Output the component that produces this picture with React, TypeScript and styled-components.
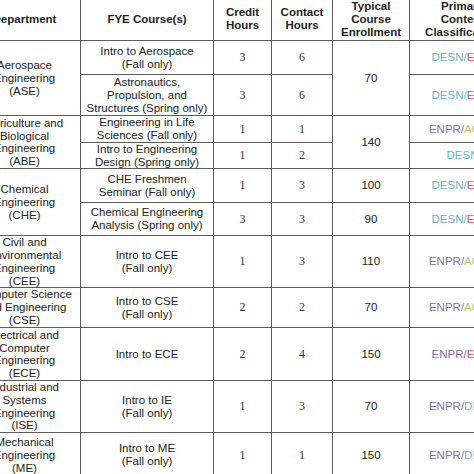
import React from 'react';
import styled, { createGlobalStyle } from 'styled-components';

const GlobalStyle = createGlobalStyle`
  html, body {
    margin: 0;
    padding: 0;
    background: #ffffff;
  }
`;

const Frame = styled.div`
  width: 474px;
  height: 474px;
  overflow: hidden;
  background: #ffffff;
`;

const Table = styled.table`
  border-collapse: collapse;
  table-layout: fixed;
  width: 547px;
  margin-left: -32px;
  margin-top: -3px;
  font-family: 'Liberation Sans', Arial, sans-serif;
  font-size: 11.5px;
  line-height: 13px;
  color: #222222;
  th,
  td {
    border: 1.5px solid #5c5c5c;
    padding: 0;
    text-align: center;
    vertical-align: middle;
    white-space: nowrap;
  }
`;

const Row = styled.tr<{ $h: number }>`
  height: ${(p) => p.$h}px;
`;

const HeadCell = styled.th`
  font-weight: bold;
  color: #1e1e1e;
`;

const Cell = styled.td<{ $serif?: boolean; $tight?: boolean }>`
  font-family: ${(p) =>
    p.$serif ? "'Liberation Serif', 'Times New Roman', serif" : "'Liberation Sans', Arial, sans-serif"};
  font-size: ${(p) => (p.$serif ? '12px' : 'inherit')};
  line-height: ${(p) => (p.$tight ? '12.7px' : 'inherit')};
  color: ${(p) => (p.$serif ? '#333333' : '#222222')};
`;

const tones: Record<string, string> = {
  DESN: '#6ab3c8',
  ESCI: '#d45a55',
  ENPR: '#80709e',
  ACAD: '#b4c46e',
};

const Tag = styled.span<{ $tone: string }>`
  color: ${(p) => p.$tone};
`;

const Classes: React.FC<{ items: string[] }> = ({ items }) => (
  <>
    {items.map((it, i) => (
      <React.Fragment key={it}>
        {i > 0 && <Tag $tone={tones[items[0]]}>/</Tag>}
        <Tag $tone={tones[it]}>{it}</Tag>
      </React.Fragment>
    ))}
  </>
);

const lines = (t: string) =>
  t.split('|').map((l, i, arr) => (
    <React.Fragment key={i}>
      {l}
      {i < arr.length - 1 && <br />}
    </React.Fragment>
  ));

export default function App() {
  return (
    <Frame>
      <GlobalStyle />
      <Table>
        <colgroup>
          <col style={{ width: 112 }} />
          <col style={{ width: 133 }} />
          <col style={{ width: 58 }} />
          <col style={{ width: 61 }} />
          <col style={{ width: 77 }} />
          <col style={{ width: 106 }} />
        </colgroup>
        <thead>
          <Row $h={43}>
            <HeadCell>Department</HeadCell>
            <HeadCell>FYE Course(s)</HeadCell>
            <HeadCell>{lines('Credit|Hours')}</HeadCell>
            <HeadCell>{lines('Contact|Hours')}</HeadCell>
            <HeadCell>{lines('Typical|Course|Enrollment')}</HeadCell>
            <HeadCell>{lines('Primary|Content|Classification')}</HeadCell>
          </Row>
        </thead>
        <tbody>
          <Row $h={34}>
            <Cell rowSpan={2}>{lines('Aerospace|Engineering|(ASE)')}</Cell>
            <Cell>{lines('Intro to Aerospace|(Fall only)')}</Cell>
            <Cell $serif>3</Cell>
            <Cell $serif>6</Cell>
            <Cell rowSpan={2}>70</Cell>
            <Cell><Classes items={['DESN', 'ESCI']} /></Cell>
          </Row>
          <Row $h={41}>
            <Cell>{lines('Astronautics,|Propulsion, and|Structures (Spring only)')}</Cell>
            <Cell $serif>3</Cell>
            <Cell $serif>6</Cell>
            <Cell><Classes items={['DESN', 'ESCI']} /></Cell>
          </Row>
          <Row $h={26}>
            <Cell rowSpan={2} $tight>{lines('Agriculture and|Biological|Engineering|(ABE)')}</Cell>
            <Cell>{lines('Engineering in Life|Sciences (Fall only)')}</Cell>
            <Cell $serif>1</Cell>
            <Cell $serif>1</Cell>
            <Cell rowSpan={2}>140</Cell>
            <Cell><Classes items={['ENPR', 'ACAD']} /></Cell>
          </Row>
          <Row $h={24}>
            <Cell $tight>{lines('Intro to Engineering|Design (Spring only)')}</Cell>
            <Cell $serif>1</Cell>
            <Cell $serif>2</Cell>
            <Cell><Classes items={['DESN']} /></Cell>
          </Row>
          <Row $h={34}>
            <Cell rowSpan={2}>{lines('Chemical|Engineering|(CHE)')}</Cell>
            <Cell>{lines('CHE Freshmen|Seminar (Fall only)')}</Cell>
            <Cell $serif>1</Cell>
            <Cell $serif>3</Cell>
            <Cell>100</Cell>
            <Cell><Classes items={['DESN', 'ESCI']} /></Cell>
          </Row>
          <Row $h={33}>
            <Cell>{lines('Chemical Engineering|Analysis (Spring only)')}</Cell>
            <Cell $serif>3</Cell>
            <Cell $serif>3</Cell>
            <Cell>90</Cell>
            <Cell><Classes items={['DESN', 'ESCI']} /></Cell>
          </Row>
          <Row $h={51}>
            <Cell $tight>{lines('Civil and|Environmental|Engineering|(CEE)')}</Cell>
            <Cell>{lines('Intro to CEE|(Fall only)')}</Cell>
            <Cell $serif>1</Cell>
            <Cell $serif>3</Cell>
            <Cell>110</Cell>
            <Cell><Classes items={['ENPR', 'ACAD']} /></Cell>
          </Row>
          <Row $h={40}>
            <Cell>{lines('Computer Science|and Engineering|(CSE)')}</Cell>
            <Cell>{lines('Intro to CSE|(Fall only)')}</Cell>
            <Cell $serif>2</Cell>
            <Cell $serif>2</Cell>
            <Cell>70</Cell>
            <Cell><Classes items={['ENPR', 'ACAD']} /></Cell>
          </Row>
          <Row $h={53}>
            <Cell $tight>{lines('Electrical and|Computer|Engineering|(ECE)')}</Cell>
            <Cell>Intro to ECE</Cell>
            <Cell $serif>2</Cell>
            <Cell $serif>4</Cell>
            <Cell>150</Cell>
            <Cell><Classes items={['ENPR', 'ESCI']} /></Cell>
          </Row>
          <Row $h={50}>
            <Cell $tight>{lines('Industrial and|Systems|Engineering|(ISE)')}</Cell>
            <Cell>{lines('Intro to IE|(Fall only)')}</Cell>
            <Cell $serif>1</Cell>
            <Cell $serif>3</Cell>
            <Cell>70</Cell>
            <Cell><Classes items={['ENPR', 'DESN']} /></Cell>
          </Row>
          <Row $h={45}>
            <Cell>{lines('Mechanical|Engineering|(ME)')}</Cell>
            <Cell>{lines('Intro to ME|(Fall only)')}</Cell>
            <Cell $serif>1</Cell>
            <Cell $serif>1</Cell>
            <Cell>150</Cell>
            <Cell><Classes items={['ENPR', 'DESN']} /></Cell>
          </Row>
        </tbody>
      </Table>
    </Frame>
  );
}
